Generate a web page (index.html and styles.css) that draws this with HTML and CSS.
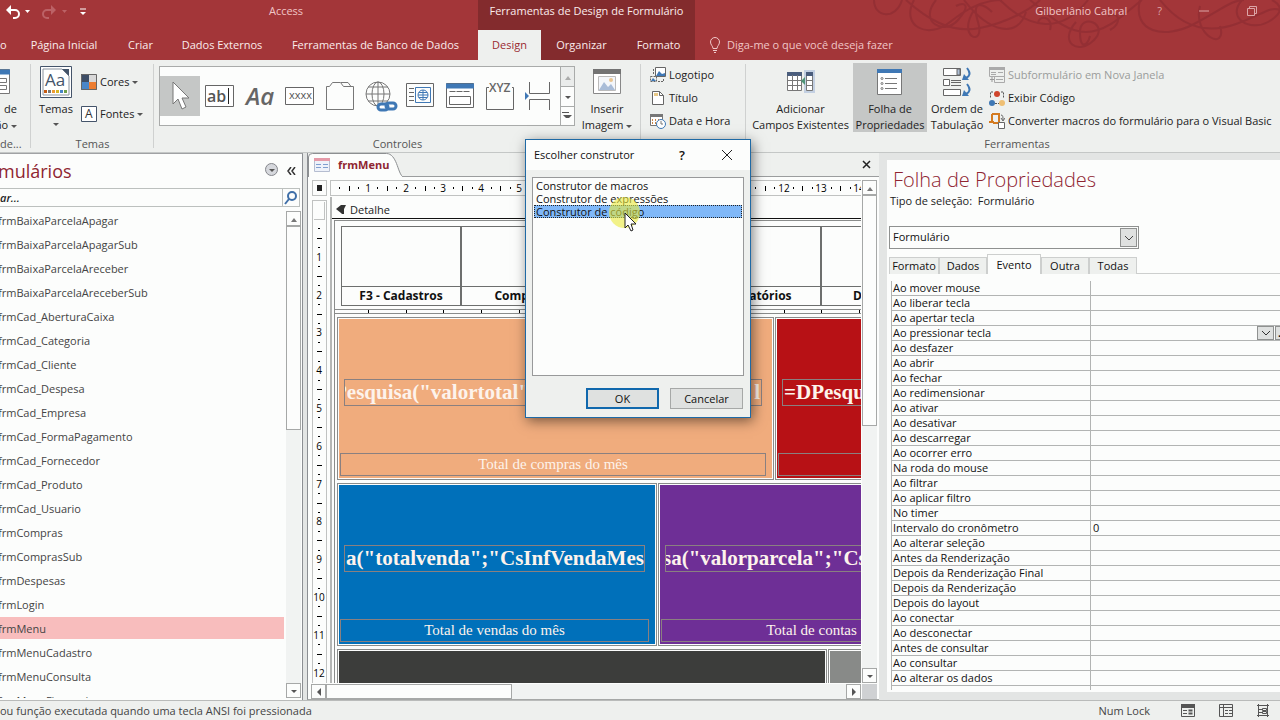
FILE: index.html
```html
<!DOCTYPE html>
<html lang="pt-BR">
<head>
    <meta charset="UTF-8">
    <meta name="viewport" content="width=device-width, initial-scale=1.0">
    <title>Access - frmMenu</title>
    <link rel="stylesheet" href="styles.css">
</head>
<body>
<header class="top">
    <svg class="swirls" width="410" height="60" viewBox="0 0 410 60" fill="none" stroke="#8b2b31" stroke-width="2">
        <path d="M4 0c0 18 22 20 28 0M44 0c-14 26 14 40 36 22S118 0 132 0M36 0c20 18 44 34 74 28s52-20 60-28M66 0c-18 22 8 36 22 20s6-18-2-14"/>
        <path d="M94 0c26 34 54 38 62 12M104 10c-18 28 12 38 4 12s8-16 14-10M130 0c30 30 62 34 88 0M180 30c4-14-12-16-12-6"/>
        <path d="M160 0c16 12 34 32 56 32s40-20 56-32M206 22c-18 20 2 34 18 18s-14-28-14-8 8 12 10 4M240 30c12-6 10-20-2-14"/>
        <path d="M270 0c-8 32 24 40 54 24S362 0 374 0M290 0c22 28 48 34 76 24s34-18 44-14M330 6c-8 30 28 46 20 20M372 0c-16 18 8 32 26 22s12-18 4-22"/>
    </svg>
    <div class="title-row">
        <div class="quick">
            <button aria-label="Desfazer"><svg width="28" height="16" viewBox="0 0 28 16"><path d="M2 6h8a4 4 0 0 1 0 8H8" fill="none" stroke="#fff" stroke-width="2"/><path d="M1 6l5-5v10z" fill="#fff"/><path d="M20 6h5l-2.500 3z" fill="#fff"/></svg></button>
            <button aria-label="Refazer"><svg width="28" height="16" viewBox="0 0 28 16"><path d="M12 6H6a4 4 0 0 0 0 8h2" fill="none" stroke="#bc6266" stroke-width="2"/><path d="M15 6l-5-5v10z" fill="#bc6266"/><path d="M21 6h5l-2.500 3z" fill="#bc6266"/></svg></button>
            <button aria-label="Personalizar"><svg width="8" height="10" viewBox="0 0 8 10"><path d="M1 2h6" stroke="#fff"/><path d="M1 5h6l-3 3z" fill="#fff"/></svg></button>
        </div>
        <div class="app-name">Access</div>
        <div class="context-title">Ferramentas de Design de Formulário</div>
        <div class="user">Gilberlânio Cabral</div>
        <div class="win">
            <button aria-label="Ajuda">?</button>
            <button aria-label="Minimizar"><svg width="12" height="12"><path d="M1 6h10" stroke="#dca5a7"/></svg></button>
            <button aria-label="Restaurar"><svg width="12" height="12" fill="none" stroke="#dca5a7"><path d="M1.500 3.500h7v7h-7zM3.500 3V1.500h7v7H9"/></svg></button>
        </div>
    </div>
    <nav class="tab-row">
        <button class="first">o</button>
        <button>Página Inicial</button>
        <button>Criar</button>
        <button>Dados Externos</button>
        <button>Ferramentas de Banco de Dados</button>
        <div class="context-tabs">
            <button class="active">Design</button>
            <button>Organizar</button>
            <button>Formato</button>
        </div>
        <button class="tell"><svg width="12" height="16" viewBox="0 0 12 16" fill="none" stroke="#f0c9ca"><path d="M4 11.500C4 9 1.500 8 1.500 5a4.500 4.500 0 0 1 9 0c0 3-2.500 4-2.500 6.500zM4 13.500h4M5 15.500h2"/></svg>Diga-me o que você deseja fazer</button>
    </nav>
</header>

<section class="ribbon">
    <div class="group g-view">
        <div class="tools">
            <button class="big">
                <svg width="30" height="28" viewBox="0 0 30 28" fill="none" stroke="#777"><path d="M.500 1.500h20v24H.500z" fill="#fff" transform="translate(2)"/><path d="M3 4h20" stroke="#3f78b5" stroke-width="5"/><path d="M10.500 10.500h9v4h-9zM10.500 17.500h9v4h-9z"/></svg>
                <span>de</span><span>ão <i class="arrow"></i></span>
            </button>
        </div>
        <div class="name">de...</div>
    </div>
    <div class="group g-themes">
        <div class="tools">
            <button class="big">
                <svg width="32" height="32" viewBox="0 0 32 32"><path d="M.5.5h31v31H.5z" fill="#fff" stroke="#44546a"/><path d="M3 3h19l7 7v19H3z" fill="#fff" stroke="#8a939e"/><path d="M22 3h7v7z" fill="#44546a"/><text x="5" y="20" font-size="17" fill="#44546a">Aa</text><path d="M4 24h3v3H4z" fill="#c55a11"/><path d="M8 24h3v3H8z" fill="#777"/><path d="M12 24h3v3h-3z" fill="#ed9b33"/><path d="M16 24h3v3h-3z" fill="#d8b526"/><path d="M20 24h3v3h-3z" fill="#4a86c8"/><path d="M24 24h3v3h-3z" fill="#70a04a"/></svg>
                <span>Temas</span><i class="arrow"></i>
            </button>
            <div class="stack two">
                <button><svg width="16" height="16"><path d="M0 0h8v8H0z" fill="#3d4d66"/><path d="M8 0h8v8H8z" fill="#d8d8d8"/><path d="M0 8h8v8H0z" fill="#4a86c8"/><path d="M8 8h8v8H8z" fill="#ed7d31"/><path d="M.5.5h15v15H.5z" fill="none" stroke="#666"/></svg>Cores <i class="arrow"></i></button>
                <button><svg width="16" height="16"><path d="M.5.5h15v15H.5z" fill="#fff" stroke="#44546a"/><text x="4" y="12" font-size="12" fill="#333">A</text></svg>Fontes <i class="arrow"></i></button>
            </div>
        </div>
        <div class="name">Temas</div>
    </div>
    <div class="group g-controls">
        <div class="tools">
            <div class="gallery">
                <button class="on" aria-label="Selecionar"><svg width="40" height="40" viewBox="0 0 40 40"><path d="M13 6v22l5-5 4 10 4-2-4-9h7z" fill="#fff" stroke="#777"/></svg></button>
                <button aria-label="Caixa de texto"><svg width="40" height="40" viewBox="0 0 40 40"><path d="M5.500 9.500h28v21h-28z" fill="#fff" stroke="#666"/><text x="7" y="26" font-size="16" font-weight="600" fill="#555">ab</text><path d="M28.500 12v16" stroke="#222"/></svg></button>
                <button aria-label="Rótulo"><svg width="40" height="40" viewBox="0 0 40 40"><text x="6" y="29" font-size="24" font-weight="600" font-style="italic" fill="#666">Aa</text></svg></button>
                <button aria-label="Botão"><svg width="40" height="40" viewBox="0 0 40 40"><path d="M5.500 11.500h28v17h-28z" fill="#fff" stroke="#666"/><text x="9" y="23" font-size="11" fill="#555">xxxx</text></svg></button>
                <button aria-label="Controle guia"><svg width="40" height="40" viewBox="0 0 40 40" fill="none" stroke="#777"><path d="M6.500 33.500V10.500h3l3-4h8l3 4h10v23zM21 6.500h7l3 4"/></svg></button>
                <button aria-label="Hiperlink"><svg width="40" height="40" viewBox="0 0 40 40" fill="none" stroke="#777"><circle cx="18" cy="18" r="12"/><ellipse cx="18" cy="18" rx="6" ry="12"/><path d="M18 6v24M6 18h24M8 11h20M8 25h20"/><g stroke="#3f78b5" stroke-width="3"><rect x="18" y="28" width="10" height="6" rx="3" fill="#fff"/><rect x="26" y="27" width="10" height="6" rx="3"/></g></svg></button>
                <button aria-label="Navegador Web"><svg width="40" height="40" viewBox="0 0 40 40" fill="none" stroke="#666"><path d="M6.500 7.500h27v23h-27zM9 12.500h5M9 16.500h5M9 20.500h5M9 24.500h5"/><path d="M15.500 11.500h15v15h-15z" stroke="#3f78b5"/><g stroke="#3f78b5"><circle cx="23" cy="19" r="5"/><path d="M23 14v10M18 19h10M19 16.500h8M19 21.500h8"/></g></svg></button>
                <button aria-label="Controle de navegação"><svg width="40" height="40" viewBox="0 0 40 40" fill="none" stroke="#666"><path d="M6.500 7.500h27v24h-27z" fill="#fff"/><path d="M6 10h28" stroke="#3f78b5" stroke-width="5"/><path d="M9.500 15.500h21" stroke-dasharray="6 1"/><path d="M9.500 20.500h21v8h-21z"/></svg></button>
                <button aria-label="Grupo de opções"><svg width="40" height="40" viewBox="0 0 40 40" fill="none" stroke="#666"><path d="M9 11.500H6.500v22h27v-22H32"/><text x="9" y="16" font-size="12" font-weight="600" fill="#666" stroke="none">XYZ</text></svg></button>
                <button aria-label="Quebra de página"><svg width="40" height="40" viewBox="0 0 40 40" fill="none" stroke="#666"><path d="M9.500 6v11.500h20V6M9.500 34V23.500h20V34"/><path d="M5 16v8l4-4z" fill="#3f78b5" stroke="none"/></svg></button>
            </div>
            <div class="gallery-scroll">
                <button class="off" aria-label="Acima"><i class="arrow up"></i></button>
                <button aria-label="Abaixo"><i class="arrow"></i></button>
                <button aria-label="Mais"><i class="arrow more"></i></button>
            </div>
            <button class="big insert">
                <svg width="28" height="28" viewBox="0 0 28 28"><path d="M.500 1.500h27v24H.500z" fill="#fff" stroke="#888"/><path d="M0 1h28v5H0z" fill="#737373"/><path d="M5.500 8.500h17v14h-17z" fill="#f4f6fa" stroke="#bbb"/><path d="M6 22l5-8 4 5 3-3 4 6z" fill="#a9bcd8"/><circle cx="18" cy="12" r="2" fill="#e9c48f"/></svg>
                <span>Inserir</span><span>Imagem <i class="arrow"></i></span>
            </button>
        </div>
        <div class="name">Controles</div>
    </div>
    <div class="group g-header">
        <div class="tools">
            <div class="stack">
                <button><svg width="16" height="16" fill="none" stroke="#666"><path d="M5.5.500h10v9h-10z" fill="#fff"/><path d="M6 9l3-5 3 3 3-1v3z" fill="#3f78b5" stroke="none"/><path d="M.500 9.500h6v5h-6zM3.500 2v6M8 14.500h5.500V11" stroke-dasharray="2 1"/><path d="M1 14l2-3 3 3z" fill="#3f78b5" stroke="none"/></svg>Logotipo</button>
                <button><svg width="16" height="16" fill="none" stroke="#666"><path d="M2.500 1.500h7l4 4v9h-11z" fill="#fff"/><path d="M9.500 1.500v4h4"/><path d="M4 3h4v3H4z" fill="#e8c987" stroke="none"/></svg>Título</button>
                <button><svg width="16" height="16" fill="none" stroke="#777"><path d="M.500 1.500h12v11H.500z" fill="#fff"/><path d="M0 2.500h13" stroke-width="3"/><path d="M2.500 6v5M5.500 6v5M8.500 6v5" stroke="#c98446" stroke-dasharray="2 1"/><circle cx="11" cy="11" r="4.500" fill="#fff" stroke="#3f78b5"/><path d="M11 8v3h2"/></svg>Data e Hora</button>
            </div>
        </div>
        <div class="name"></div>
    </div>
    <div class="group g-tools">
        <div class="tools">
            <button class="big fields">
                <svg width="28" height="28" viewBox="0 0 28 28" fill="none" stroke="#777"><path d="M17 2h11v23H17z" fill="#c3d0e2" stroke="none"/><path d="M.500 4.500h14v18H.500zM19.500 4.500h6v18h-6z" fill="#fff"/><path d="M0 6h15M19 6h7" stroke="#4a5d7c" stroke-width="4"/><path d="M5.500 7v16M10.500 7v16M0 12.500h15M0 17.500h15M19 12.500h7M19 17.500h7"/><path d="M18 9v8l-4-4z" fill="#4e9478" stroke="none"/></svg>
                <span>Adicionar</span><span>Campos Existentes</span>
            </button>
            <button class="big sheet-btn on">
                <svg width="26" height="28" viewBox="0 0 26 28" fill="none" stroke="#777"><path d="M.500 1.500h24v25H.500z" fill="#fff"/><path d="M0 3h25" stroke="#3f78b5" stroke-width="4"/><path d="M8 10.500h12M8 15.500h12M8 20.500h12"/><circle cx="5" cy="10.500" r="1"/><circle cx="5" cy="15.500" r="1"/><circle cx="5" cy="20.500" r="1"/></svg>
                <span>Folha de</span><span>Propriedades</span>
            </button>
            <button class="big order">
                <svg width="30" height="30" viewBox="0 0 30 30" fill="none" stroke="#666"><path d="M1.500 1.500h17v7h-17zM1.500 12.500h6v6h-6zM1.500 22.500h17v6h-17zM9 13.500h10M9 15.500h10M9 18.500h10" fill="#fff"/><path d="M15 2h3v6h-3z" fill="#aebfd6"/><path d="M25 1c4 5 3 8-1 10M25 17c4 5 3 8-1 10" stroke="#3f78b5" stroke-width="2"/><path d="M20 13l2-6 5 6zM20 29l2-6 5 6z" fill="#3f78b5" stroke="none"/></svg>
                <span>Ordem de</span><span>Tabulação</span>
            </button>
            <div class="stack">
                <button disabled><svg width="16" height="16" fill="none" stroke="#aaa"><path d="M.500 1.500h15v8H.500zM5.500 9.500h10v6h-10zM2 5.500h5M9 5.500h5M2 7.500h5M7 12.500h7"/><path d="M0 1.500h16" stroke-width="3"/><path d="M3 10v5M1 12.500h4" stroke="#999"/></svg>Subformulário em Nova Janela</button>
                <button><svg width="16" height="16" fill="none" stroke="#555"><path d="M4 2H1.500v6M12 2h2.500v6M6 13.500h4" stroke-dasharray="2 1"/><circle cx="8" cy="4" r="3" fill="#d0452c" stroke="none"/><circle cx="3" cy="13" r="3" fill="#3f78b5" stroke="none"/><circle cx="13" cy="13" r="3" fill="#efbf74" stroke="none"/></svg>Exibir Código</button>
                <button><svg width="16" height="16" fill="none" stroke="#d47a1f" stroke-width="2"><path d="M3 1h7v9H4M3 1v7M0 9h5"/><path d="M12 2c2 0 2 2 2 5M12 5l2 3 2-3" stroke="#666" stroke-width="1"/><path d="M9.500 9.500h6v6h-6z" fill="#fff" stroke="#666" stroke-width="1"/></svg>Converter macros do formulário para o Visual Basic</button>
            </div>
        </div>
        <div class="name">Ferramentas</div>
    </div>
</section>

<main class="work">
    <aside class="nav-pane">
        <div class="nav-head">
            <h2>mulários</h2>
            <button class="round" aria-label="Opções"><i class="arrow"></i></button>
            <button class="collapse" aria-label="Recolher"><svg width="9" height="8" fill="none" stroke="#333" stroke-width="1.500"><path d="M4 0L1 4l3 4M8 0L5 4l3 4"/></svg></button>
        </div>
        <div class="search">
            <input type="text" placeholder="ar..." aria-label="Pesquisar">
            <button aria-label="Pesquisar"><svg width="14" height="14" fill="none" stroke="#3f6fa8" stroke-width="2"><circle cx="8" cy="5" r="4"/><path d="M5 8l-4 5"/></svg></button>
        </div>
        <div class="nav-body">
            <ul>
                <li>frmBaixaParcelaApagar</li>
                <li>frmBaixaParcelaApagarSub</li>
                <li>frmBaixaParcelaAreceber</li>
                <li>frmBaixaParcelaAreceberSub</li>
                <li>frmCad_AberturaCaixa</li>
                <li>frmCad_Categoria</li>
                <li>frmCad_Cliente</li>
                <li>frmCad_Despesa</li>
                <li>frmCad_Empresa</li>
                <li>frmCad_FormaPagamento</li>
                <li>frmCad_Fornecedor</li>
                <li>frmCad_Produto</li>
                <li>frmCad_Usuario</li>
                <li>frmCompras</li>
                <li>frmComprasSub</li>
                <li>frmDespesas</li>
                <li>frmLogin</li>
                <li class="selected">frmMenu</li>
                <li>frmMenuCadastro</li>
                <li>frmMenuConsulta</li>
                <li>frmMenuFinanceiro</li>
            </ul>
            <div class="vscroll">
                <button aria-label="Acima"><i class="arrow up"></i></button>
                <div class="thumb"></div>
                <button aria-label="Abaixo"><i class="arrow"></i></button>
            </div>
        </div>
    </aside>

    <section class="doc">
        <div class="doc-tabs">
            <div class="doc-tab">
                <svg class="tab-edge" width="96" height="24" viewBox="0 0 96 24"><path d="M.500 24V4q0-3.500 4-3.500h74c5 0 8 5 10 10s4 13 7 13.500" fill="#fcfdfc" stroke="#8c8f91"/></svg>
                <svg width="16" height="14"><path d="M.5.500h15v13H.5z" fill="#eef2fa" stroke="#b5bdd0"/><path d="M0 0h16v3H0z" fill="#e59aa8"/><path d="M2 6.500h5M2 9.500h5M9 6.500h5M9 9.500h5" stroke="#7f9fd0"/></svg>
                <span>frmMenu</span>
            </div>
            <button class="doc-close" aria-label="Fechar"><svg width="9" height="9" stroke="#222" stroke-width="1.500"><path d="M1 1l7 7M8 1L1 8"/></svg></button>
        </div>
        <div class="design">
            <div class="corner"></div>
            <div class="h-ruler"><svg id="hRuler" width="100%" height="16"></svg></div>
            <div class="v-ruler"><div class="section-box"></div><svg id="vRuler" width="14" height="470"></svg></div>
            <div class="surface">
                <div class="section-bar"><svg width="10" height="9"><path d="M0 4l5-4h5L8 4v5H6L5 8z" fill="#333"/></svg>Detalhe</div>
                <div class="form">
                    <div class="menu">
                        <div class="item"><div class="pic"></div><div class="cap">F3 - Cadastros</div></div>
                        <div class="item"><div class="pic"></div><div class="cap">Compras</div></div>
                        <div class="item"><div class="pic"></div><div class="cap"></div></div>
                        <div class="item"><div class="pic"></div><div class="cap">Relatórios</div></div>
                        <div class="item"><div class="pic"></div><div class="cap">Despesas</div></div>
                    </div>
                    <div class="divider"><svg id="ticks" width="100%" height="3"></svg></div>
                    <div class="tiles">
                        <div class="row">
                            <div class="tile orange">
                                <div class="field"><span class="cut">Pesquisa("valortotal"</span><span>l</span></div>
                                <div class="label">Total de compras do mês</div>
                            </div>
                            <div class="tile red">
                                <div class="field"><span>=DPesquisa(</span></div>
                                <div class="label"></div>
                            </div>
                        </div>
                        <div class="row">
                            <div class="tile blue">
                                <div class="field"><span>a("totalvenda";"CsInfVendaMes</span></div>
                                <div class="label">Total de vendas do mês</div>
                            </div>
                            <div class="tile purple">
                                <div class="field"><span>sa("valorparcela";"CsInf</span></div>
                                <div class="label">Total de contas</div>
                            </div>
                        </div>
                        <div class="row">
                            <div class="tile dark"></div>
                            <div class="tile gray"></div>
                        </div>
                    </div>
                </div>
            </div>
            <div class="vscroll">
                <button aria-label="Acima"><i class="arrow up"></i></button>
                <div class="thumb"></div>
                <button aria-label="Abaixo"><i class="arrow"></i></button>
            </div>
            <div class="hscroll">
                <button aria-label="Esquerda"><i class="arrow left"></i></button>
                <div class="thumb"></div>
                <button aria-label="Direita"><i class="arrow right"></i></button>
            </div>
            <div class="grip"></div>
        </div>
    </section>

    <aside class="props">
        <h2>Folha de Propriedades</h2>
        <p>Tipo de seleção: &nbsp;Formulário</p>
        <div class="combo">
            <select aria-label="Objeto"><option>Formulário</option></select>
            <span class="drop"><svg width="10" height="6" fill="none" stroke="#444"><path d="M1 1l4 4 4-4"/></svg></span>
        </div>
        <div class="prop-tabs">
            <button>Formato</button>
            <button>Dados</button>
            <button class="active">Evento</button>
            <button>Outra</button>
            <button>Todas</button>
        </div>
        <div class="grid-wrap">
            <table>
                <tr><th>Ao mover mouse</th><td></td></tr>
                <tr><th>Ao liberar tecla</th><td></td></tr>
                <tr><th>Ao apertar tecla</th><td></td></tr>
                <tr><th>Ao pressionar tecla</th><td><div class="cell-btns"><button aria-label="Lista"><svg width="8" height="5" fill="none" stroke="#333"><path d="M0 0l4 4 4-4"/></svg></button><button class="dots" aria-label="Construtor">...</button></div></td></tr>
                <tr><th>Ao desfazer</th><td></td></tr>
                <tr><th>Ao abrir</th><td></td></tr>
                <tr><th>Ao fechar</th><td></td></tr>
                <tr><th>Ao redimensionar</th><td></td></tr>
                <tr><th>Ao ativar</th><td></td></tr>
                <tr><th>Ao desativar</th><td></td></tr>
                <tr><th>Ao descarregar</th><td></td></tr>
                <tr><th>Ao ocorrer erro</th><td></td></tr>
                <tr><th>Na roda do mouse</th><td></td></tr>
                <tr><th>Ao filtrar</th><td></td></tr>
                <tr><th>Ao aplicar filtro</th><td></td></tr>
                <tr><th>No timer</th><td></td></tr>
                <tr><th>Intervalo do cronômetro</th><td>0</td></tr>
                <tr><th>Ao alterar seleção</th><td></td></tr>
                <tr><th>Antes da Renderização</th><td></td></tr>
                <tr><th>Depois da Renderização Final</th><td></td></tr>
                <tr><th>Depois da Renderização</th><td></td></tr>
                <tr><th>Depois do layout</th><td></td></tr>
                <tr><th>Ao conectar</th><td></td></tr>
                <tr><th>Ao desconectar</th><td></td></tr>
                <tr><th>Antes de consultar</th><td></td></tr>
                <tr><th>Ao consultar</th><td></td></tr>
                <tr><th>Ao alterar os dados</th><td></td></tr>
                <tr><th></th><td></td></tr>
            </table>
        </div>
    </aside>
</main>

<footer class="status">
    <span class="msg">ou função executada quando uma tecla ANSI foi pressionada</span>
    <span>Num Lock</span>
    <button aria-label="Modo Formulário"><svg width="14" height="13" fill="none" stroke="#555"><path d="M.5.500h13v12H.5zM2 6.500h4M2 9.500h4"/><path d="M0 2h14" stroke-width="4"/><path d="M7.500 6.500h4M7.500 9.500h4" stroke-width="2"/></svg></button>
    <button aria-label="Modo Layout"><svg width="14" height="13" fill="none" stroke="#555"><path d="M.5.500h13v12H.5zM0 3.500h14M4.500 0v13M6 6.500h3M10 6.500h3M6 9.500h3M10 9.500h3"/></svg></button>
    <button aria-label="Modo Design"><svg width="12" height="13" fill="none" stroke="#555"><path d="M1.500 0v13M10.500 0v13M0 1.500h12M0 11.500h12M2 5.500h3M2 8.500h3M5.500 4.500h4v2h-4zM5.500 7.500h4v2h-4z"/></svg></button>
</footer>

<div class="dialog" role="dialog" aria-labelledby="dlgTitle">
    <div class="dlg-title">
        <span id="dlgTitle">Escolher construtor</span>
        <button class="help" aria-label="Ajuda">?</button>
        <button aria-label="Fechar"><svg width="12" height="12" stroke="#222"><path d="M1 1l10 10M11 1L1 11"/></svg></button>
    </div>
    <ul class="dlg-list" role="listbox">
        <li role="option">Construtor de macros</li>
        <li role="option">Construtor de expressões</li>
        <li role="option" class="picked" aria-selected="true">Construtor de código</li>
    </ul>
    <div class="dlg-buttons">
        <button class="ok">OK</button>
        <button>Cancelar</button>
    </div>
    <div class="halo"></div>
    <svg class="pointer" width="13" height="20"><path d="M1 1v15l3-3 3 6 2-1-2-6h5z" fill="#fff" stroke="#222"/></svg>
</div>

<script>
    const CM = 37.8;

    // numbers on the centimetres, a dash on the halves, dots on the quarters
    function drawRuler(id, count, vertical, start, mid) {
        let out = '';
        for (let q = 1; q <= count * 4; q++) {
            const p = Math.round(start + q * CM / 4);
            if (q % 4 === 0) {
                const x = vertical ? mid : p;
                const y = vertical ? p + 4 : mid + 4;
                out += `<text x="${x}" y="${y}">${q / 4}</text>`;
            } else {
                const len = q % 2 === 0 ? 5 : 2;
                const x = vertical ? mid - Math.floor(len / 2) : p;
                const y = vertical ? p : mid - Math.floor(len / 2);
                out += `<rect x="${x}" y="${y}" width="${vertical ? len : 1}" height="${vertical ? 1 : len}"/>`;
            }
        }
        document.getElementById(id).innerHTML = out;
    }

    // one mark per centimetre along the section edge
    function drawTicks(id, count, start) {
        let out = '';
        for (let i = 1; i <= count; i++) {
            out += `<rect x="${Math.round(start + i * CM)}" y="0" width="1" height="3"/>`;
        }
        document.getElementById(id).innerHTML = out;
    }

    drawRuler('hRuler', 14, false, -1, 7);
    drawRuler('vRuler', 12, true, -2, 6);
    drawTicks('ticks', 14, -5);
</script>
</body>
</html>
```
FILE: styles.css
```css
* {
    box-sizing: border-box;
}

body {
    margin: 0;
    height: 100vh;
    display: flex;
    flex-direction: column;
    overflow: hidden;
    font-family: "Open Sans", "Noto Sans", sans-serif;
    font-size: 11px;
    line-height: 16px;
    color: #222;
    background: #e3e5e4;
}

button {
    font: inherit;
    color: inherit;
    background: none;
    border: 0;
    padding: 0;
    white-space: nowrap;
}

h2, p, ul {
    margin: 0;
    padding: 0;
    list-style: none;
    font-weight: normal;
}

svg {
    flex: none;
    display: block;
}

/* small triangles */
.arrow {
    display: inline-block;
    border: 3px solid transparent;
    border-top-color: #555;
    border-bottom: 0;
    vertical-align: middle;
}

.arrow.up {
    border-top: 0;
    border-bottom: 4px solid #777;
}

.arrow.left {
    border: 4px solid transparent;
    border-right-color: #555;
    border-left: 0;
}

.arrow.right {
    border: 4px solid transparent;
    border-left-color: #555;
    border-right: 0;
}

/* title bar and tabs */
.top {
    position: relative;
    flex: none;
    background: #a33639;
    color: #fbecec;
}

.swirls {
    position: absolute;
    right: 0;
    top: 0;
    opacity: 0.6;
}

.title-row {
    position: relative;
    display: flex;
    height: 30px;
    line-height: 22px;
}

.quick {
    display: flex;
    align-items: flex-start;
    gap: 8px;
    width: 94px;
    padding: 4px 0 0 5px;
}

.quick button:last-child {
    padding: 3px 0 0 2px;
}

.app-name {
    width: 384px;
    text-align: center;
    color: #f0c5c6;
}

.context-title {
    width: 217px;
    background: #832b2d;
    text-align: center;
}

.user {
    flex: 1;
    text-align: right;
    color: #f0c5c6;
}

.win {
    display: flex;
    align-items: flex-start;
    gap: 36px;
    padding: 0 22px 0 30px;
    color: #dca5a7;
}

.win svg {
    margin-top: 5px;
}

.tab-row {
    position: relative;
    display: flex;
    height: 30px;
}

.tab-row > button:nth-child(1) { width: 14px; text-align: left; }
.tab-row > button:nth-child(2) { width: 100px; }
.tab-row > button:nth-child(3) { width: 53px; }
.tab-row > button:nth-child(4) { width: 110px; }
.tab-row > button:nth-child(5) { width: 201px; padding-right: 4px; }

.context-tabs {
    display: grid;
    grid-template-columns: 63px 81px 73px;
    background: #832b2d;
}

.context-tabs .active {
    background: #eef0ee;
    color: #9a2a30;
}

.tab-row .tell {
    display: flex;
    align-items: center;
    gap: 6px;
    padding-left: 14px;
    color: #f0c5c6;
}

/* ribbon */
.ribbon {
    flex: none;
    display: flex;
    height: 93px;
    background: #eef0ee;
    border-bottom: 1px solid #c4c7c6;
    overflow: hidden;
}

.group {
    flex: none;
    display: flex;
    flex-direction: column;
    position: relative;
}

.group:not(:last-child)::after {
    content: "";
    position: absolute;
    right: 0;
    top: 4px;
    bottom: 4px;
    border-right: 1px solid #cfd1d0;
}

.g-view { width: 31px; }
.g-themes { width: 123px; }
.g-controls { width: 487px; }
.g-header { width: 105px; }
.g-tools { flex: 1; }

.tools {
    flex: 1;
    display: flex;
    align-items: flex-start;
    padding-top: 3px;
}

.name {
    height: 16px;
    text-align: center;
    color: #555;
}

.g-tools .name {
    padding-left: 8px;
}

.big {
    display: flex;
    flex-direction: column;
    align-items: center;
    height: 69px;
    padding-top: 4px;
}

.big svg {
    height: 32px;
    padding-bottom: 2px;
    margin-bottom: 2px;
}

.g-view .big {
    width: 17px;
    align-items: flex-end;
}

.g-view .name {
    text-align: left;
}

.g-themes .big {
    width: 50px;
    padding-top: 3px;
}

.g-themes .big svg {
    padding: 0;
    margin-bottom: 3px;
}

.g-themes .big .arrow {
    margin-top: 6px;
}

.stack {
    display: flex;
    flex-direction: column;
    gap: 7px;
    padding: 4px 0 0 9px;
}

.stack button {
    display: flex;
    align-items: center;
    gap: 3px;
    height: 16px;
}

.stack.two {
    gap: 16px;
    padding: 11px 0 0 0;
}

.stack button:disabled {
    color: #9a9c9b;
}

.gallery {
    display: flex;
    align-items: center;
    height: 60px;
    margin: 3px 0 0 5px;
    background: #fcfdfc;
    border: 1px solid #a9abaa;
    border-right: 0;
}

.gallery .on,
.big.on {
    background: #c5c7c6;
}

.gallery-scroll {
    width: 15px;
    height: 60px;
    margin-top: 3px;
    display: grid;
    grid-template-rows: 1fr 1fr 1fr;
    border: 1px solid #a9abaa;
    background: #fcfdfc;
}

.gallery-scroll button + button {
    border-top: 1px solid #a9abaa;
}

.gallery-scroll .off {
    background: #dfe1e0;
    opacity: 0.6;
}

.gallery-scroll .more::before {
    content: "";
    display: block;
    width: 7px;
    border-top: 1px solid #555;
    margin: -6px 0 0 -4px;
}

.insert { width: 64px; }
.fields { width: 107px; padding-left: 2px; }
.sheet-btn { width: 74px; }
.order { width: 60px; }
.g-tools .stack { padding-left: 2px; }

/* main area */
.work {
    flex: 1;
    min-height: 0;
    display: flex;
}

.nav-pane {
    flex: none;
    width: 303px;
    display: flex;
    flex-direction: column;
    background: #fcfdfc;
    border-top: 1px solid #a0a2a4;
    border-right: 1px solid #8c8f93;
    overflow: hidden;
}

.nav-head {
    flex: none;
    display: flex;
    align-items: center;
    height: 34px;
    padding-right: 5px;
}

.nav-head h2 {
    flex: 1;
    margin-left: -2px;
    font-size: 18px;
    line-height: 24px;
    color: #8f2531;
}

.round {
    width: 13px;
    height: 13px;
    border: 1px solid #85878c;
    border-radius: 50%;
    background: #d6d8dd;
    line-height: 8px;
    margin: 0 9px 4px 0;
}

.collapse {
    width: 10px;
}

.search {
    flex: none;
    display: flex;
    height: 19px;
    margin-right: 2px;
    border: 1px solid #bcc0be;
    border-left: 0;
}

.search input {
    flex: 1;
    border: 0;
    padding: 0;
    background: none;
    font: italic 600 11px "Open Sans", "Noto Sans", sans-serif;
}

.search input::placeholder {
    color: #222;
}

.search button {
    width: 17px;
    padding-left: 1px;
    border-left: 1px solid #bcc0be;
}

.nav-body {
    flex: 1;
    min-height: 0;
    display: flex;
    justify-content: space-between;
    padding-bottom: 2px;
}

.nav-body ul {
    width: 284px;
    padding-top: 2px;
    overflow: hidden;
}

.nav-body li {
    height: 24px;
    line-height: 24px;
    color: #444;
    text-indent: -2px;
}

.nav-body .selected {
    background: #f8bdbd;
    background-clip: content-box;
    padding-bottom: 2px;
}

.nav-body .vscroll {
    margin-top: 4px;
    margin-right: 1px;
}

.vscroll {
    width: 15px;
    display: flex;
    flex-direction: column;
    background: #f1f3f2;
}

.vscroll button,
.hscroll button {
    flex: none;
    width: 15px;
    height: 15px;
    border: 1px solid #a6a8a7;
    background: #fcfdfc;
    line-height: 8px;
}

.thumb {
    background: #fcfdfc;
    border: 1px solid #a6a8a7;
}

.nav-body .thumb {
    height: 204px;
}

.vscroll button:last-child,
.hscroll button:last-child {
    margin-top: auto;
}

/* form in design view */
.doc {
    flex: 1;
    min-width: 0;
    display: flex;
    flex-direction: column;
    margin-left: 4px;
    border-left: 1px solid #8c8f93;
    border-bottom: 1px solid #a6a8a7;
    background: #fcfdfc;
}

.doc-tabs {
    flex: none;
    display: flex;
    align-items: center;
    height: 24px;
    background: #eef0ee;
    border-bottom: 1px solid #9b9d9e;
}

.doc-tab {
    position: relative;
    display: flex;
    align-items: center;
    gap: 8px;
    height: 24px;
    padding-left: 6px;
    font-size: 11px;
    font-weight: bold;
    color: #8f2531;
}

.doc-tab .tab-edge {
    position: absolute;
    left: 0;
    top: 0;
}

.doc-tab svg,
.doc-tab span {
    position: relative;
}

.doc-close {
    margin-left: auto;
    padding-right: 8px;
}

.design {
    flex: 1;
    min-height: 0;
    display: grid;
    grid-template-columns: 18px minmax(0, 1fr) 15px;
    grid-template-rows: 16px minmax(0, 1fr) 15px;
    gap: 1px;
    padding: 3px 2px 0 3px;
}

.corner {
    margin: 0 2px 0 1px;
    border: 1px solid #c0c2c1;
    background: #222;
    background-clip: content-box;
    padding: 4px;
}

.h-ruler {
    border: 1px solid #c0c2c1;
    border-right: 0;
    overflow: hidden;
}

.h-ruler text,
.v-ruler text {
    font-size: 10px;
    text-anchor: middle;
}

.v-ruler {
    display: flex;
    flex-direction: column;
    margin: 3px 2px 0 1px;
    border: 1px solid #c0c2c1;
    border-bottom: 0;
    overflow: hidden;
}

.section-box {
    flex: none;
    height: 18px;
    margin: 1px;
    border-right: 1px solid #c0c2c1;
    border-bottom: 1px solid #c0c2c1;
}

.surface {
    display: flex;
    flex-direction: column;
    border-left: 2px solid #b4b6b5;
    overflow: hidden;
}

.section-bar {
    flex: none;
    display: flex;
    align-items: center;
    gap: 4px;
    height: 22px;
    padding: 4px 0 0 4px;
    border-bottom: 1px solid #111;
}

.form {
    flex: 1;
    overflow: hidden;
    margin: 1px 0 0 2px;
    border-left: 1px solid #8a8c8b;
    border-top: 1px solid #8a8c8b;
}

.menu {
    display: flex;
    padding: 5px 0 3px 6px;
}

.item {
    flex: none;
    width: 120px;
    border: 1px solid #6d6f6e;
    text-align: center;
}

.item .pic {
    height: 59px;
}

.item .cap {
    height: 19px;
    line-height: 18px;
    border-top: 1px solid #6d6f6e;
    font-size: 12px;
    font-weight: bold;
    color: #111;
}

.divider {
    height: 5px;
    border-top: 1px solid #8a8c8b;
    border-bottom: 1px solid #8a8c8b;
}

.tiles {
    padding: 3px 0 0 2px;
    font-family: "Liberation Serif", serif;
    color: #fdf3ec;
}

.row {
    display: flex;
    gap: 1px;
    margin-bottom: 3px;
}

.tile {
    flex: none;
    height: 163px;
    padding: 1px;
    border: 1px solid #8a8c8b;
    background-clip: content-box;
}

.orange { width: 437px; background-color: #f0ac7d; }
.red { width: 438px; background-color: #b71115; }
.blue { width: 320px; background-color: #0070ba; }
.purple { width: 312px; background-color: #6e2f96; }
.dark { width: 490px; background-color: #3c3d3b; }
.gray { width: 200px; background-color: #888a88; }

.field {
    display: flex;
    justify-content: space-between;
    height: 27px;
    margin: 60px 10px 0 5px;
    padding: 0 1px;
    border: 1px solid #8a8080;
    font-size: 21px;
    line-height: 25px;
    font-weight: bold;
    white-space: nowrap;
    overflow: hidden;
}

.field .cut {
    margin-left: -12px;
}

.purple .field span {
    margin-left: -4px;
}

.label {
    height: 23px;
    margin: 47px 6px 0 1px;
    border: 1px solid #8a8080;
    font-size: 15px;
    line-height: 20px;
    text-align: center;
}

.doc .vscroll {
    grid-row: 1 / 3;
    grid-column: 3;
}

.doc .vscroll .thumb {
    height: 231px;
}

.hscroll {
    grid-column: 1 / 3;
    display: flex;
    background: #f1f3f2;
}

.hscroll .thumb {
    width: 186px;
}

.hscroll button:last-child {
    margin: 0 0 0 auto;
}

.grip {
    background: #cfd1d3;
}

/* property sheet */
.props {
    flex: none;
    width: 393px;
    margin: 7px 0 8px 8px;
    padding: 7px 0 0 3px;
    display: flex;
    flex-direction: column;
    background: #fcfdfc;
    overflow: hidden;
}

.props h2 {
    padding-left: 3px;
    font-size: 20px;
    line-height: 26px;
    font-weight: 300;
    color: #8f2531;
}

.combo {
    flex: none;
    position: relative;
    width: 250px;
    height: 23px;
    margin: 17px 0 5px -1px;
}

.combo select {
    width: 100%;
    height: 100%;
    appearance: none;
    border: 1px solid #8f9190;
    border-radius: 0;
    background: #fcfdfc;
    padding: 0 3px 2px;
    font: inherit;
    color: #111;
}

.drop {
    position: absolute;
    right: 2px;
    top: 2px;
    bottom: 2px;
    width: 17px;
    display: grid;
    place-items: center;
    border: 1px solid #8f9190;
    background: #dfe1e0;
    pointer-events: none;
}

.prop-tabs {
    flex: none;
    display: grid;
    grid-template-columns: 50px 48px 54px 48px 48px;
    align-items: end;
    height: 20px;
    margin-left: -1px;
    border-bottom: 1px solid #cdcfce;
    color: #111;
}

.prop-tabs button {
    height: 17px;
    background: #eef0ee;
    border: 1px solid #cdcfce;
    border-bottom: 0;
}

.prop-tabs .active {
    height: 20px;
    background: #fcfdfc;
}

.grid-wrap {
    flex: 1;
    min-height: 0;
    overflow: hidden;
    margin: 7px 0 2px 1px;
}

table {
    width: 100%;
    border-collapse: separate;
    border-spacing: 0;
    table-layout: fixed;
    color: #111;
}

th, td {
    height: 15px;
    padding: 0 1px;
    line-height: 14px;
    text-align: left;
    font-weight: normal;
    border: 1px solid #b2b4b3;
    border-top: 0;
    border-right: 0;
    white-space: nowrap;
}

th {
    width: 199px;
}

td {
    padding-left: 2px;
}

.cell-btns {
    display: flex;
    justify-content: flex-end;
    gap: 1px;
    height: 14px;
    margin-right: -8px;
}

.cell-btns button {
    width: 17px;
    padding-left: 4px;
    border: 1px solid #8f9190;
    background: #dfe1e0;
}

.cell-btns .dots {
    width: 12px;
    padding-left: 2px;
    line-height: 6px;
    font-weight: bold;
}

/* status bar */
.status {
    flex: none;
    display: flex;
    align-items: center;
    height: 20px;
    padding-right: 11px;
    background: #eef0ee;
    border-top: 1px solid #b9bbba;
    color: #444;
}

.status .msg {
    flex: 1;
}

.status button {
    margin-left: 24px;
}

.status span + button {
    margin-left: 31px;
}

/* builder dialog */
.dialog {
    position: absolute;
    left: 525px;
    top: 139px;
    width: 226px;
    padding-bottom: 8px;
    background: #eef0ee;
    border: 1px solid #1f6aa5;
    box-shadow: 2px 3px 12px rgba(0, 0, 0, 0.5);
    color: #111;
}

.dlg-title {
    display: flex;
    align-items: center;
    height: 30px;
    padding: 0 17px 0 8px;
    background: #fcfdfc;
}

.dlg-title span {
    flex: 1;
}

.dlg-title .help {
    margin-right: 36px;
    font-size: 13px;
    font-weight: 600;
}

.dlg-list {
    height: 199px;
    margin: 7px 6px 0;
    padding: 1px;
    border: 1px solid #98999a;
    background: #fcfdfc;
}

.dlg-list li {
    height: 13px;
    line-height: 11px;
    padding: 0 1px;
    border: 1px solid transparent;
}

.dlg-list .picked {
    background: #80b8f8;
    border: 1px dotted #222;
}

.dlg-buttons {
    display: flex;
    justify-content: flex-end;
    gap: 11px;
    padding: 12px 7px 0;
}

.dlg-buttons button {
    width: 73px;
    height: 21px;
    border: 1px solid #a6a8a7;
    background: #dfe1e0;
}

.dlg-buttons .ok {
    border: 2px solid #1068ad;
}

.halo {
    position: absolute;
    left: 83px;
    top: 57px;
    width: 31px;
    height: 31px;
    border-radius: 50%;
    background: rgba(235, 235, 60, 0.6);
}

.pointer {
    position: absolute;
    left: 98px;
    top: 72px;
}
```
